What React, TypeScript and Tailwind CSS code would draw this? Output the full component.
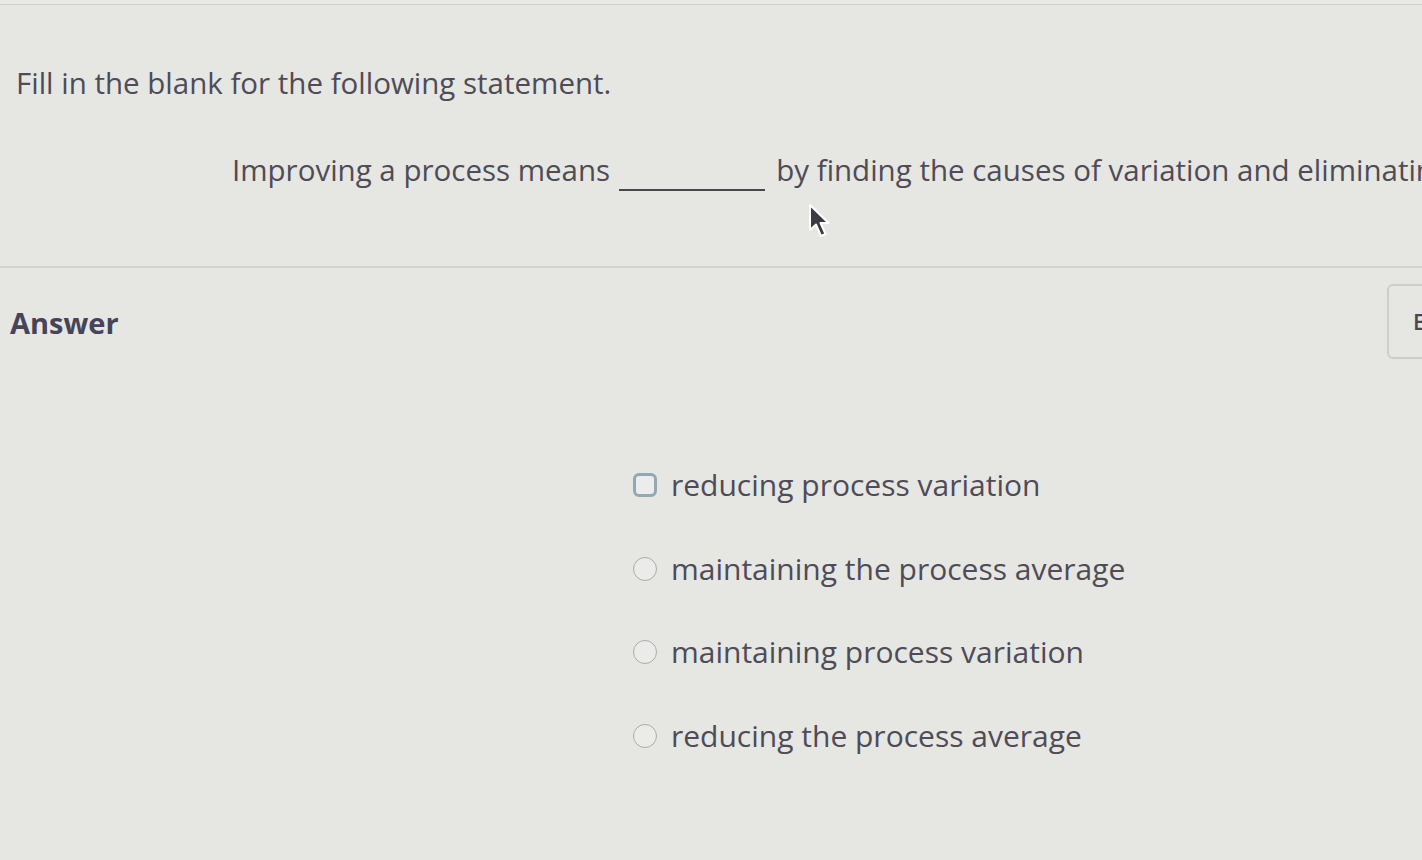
const options = [
  "reducing process variation",
  "maintaining the process average",
  "maintaining process variation",
  "reducing the process average",
];

const App = () => (
  <div
    className="w-[1422px] h-[860px] overflow-hidden bg-[#e6e6e3] text-[#4f4b57]"
    style={{ fontFamily: '"Open Sans", "Liberation Sans", sans-serif' }}
  >
    <div className="h-[5px] bg-[#e9e9e7] border-b border-[#cfcfcd]" />

    <section className="relative h-[263px] border-b-2 border-[#d2d2cf]">
      <p className="pt-[58px] pl-[16px] text-[29.5px] leading-[40px]">
        Fill in the blank for the following statement.
      </p>
      <div className="flex items-end mt-[47px] pl-[232px] whitespace-nowrap text-[29.5px] leading-[40px]">
        <span className="shrink-0">Improving a process means</span>
        <span className="shrink-0 w-[146px] h-[2px] bg-[#4a4750] ml-[9px] mr-[11px] -mb-[1px]" />
        <span className="shrink-0">by finding the causes of variation and eliminating them</span>
      </div>
      <svg className="absolute left-[806px] top-[197px]" width="28" height="40" viewBox="0 0 28 40">
        <path
          d="M4 3 L4 28 L10 22.5 L15 34 L19.5 32 L14.5 21 L22.5 21 Z"
          fill="#3b3a42"
          stroke="#fff"
          strokeWidth="2"
          strokeLinejoin="round"
        />
      </svg>
    </section>

    <section className="relative">
      <div className="flex items-start justify-between">
        <h2 className="pl-[10px] pt-[36px] text-[29px] font-bold leading-[38px] text-[#47445a]">
          Answer
        </h2>
        <div className="mt-[16px] -mr-[60px] w-[95px] h-[75px] rounded-[6px] border-2 border-[#cdcdcb] flex items-center pl-[24px] text-[22px] font-semibold text-[#4a4755]">
          E
        </div>
      </div>

      <ul className="mt-[106px] pl-[633px] flex flex-col gap-[43.5px]">
        {options.map((o, i) => (
          <li key={o} className="flex items-center gap-[14px] h-[40px]">
            {i === 0 ? (
              <span className="w-[24px] h-[24px] rounded-[6px] border-[3px] border-[#93a7b4] bg-[#ececea]" />
            ) : (
              <span className="w-[24px] h-[24px] rounded-full border-[1.5px] border-[#aaaaa8] bg-[#ebebea]" />
            )}
            <span className="text-[30px] leading-[40px]">{o}</span>
          </li>
        ))}
      </ul>
    </section>
  </div>
);

export default App;
